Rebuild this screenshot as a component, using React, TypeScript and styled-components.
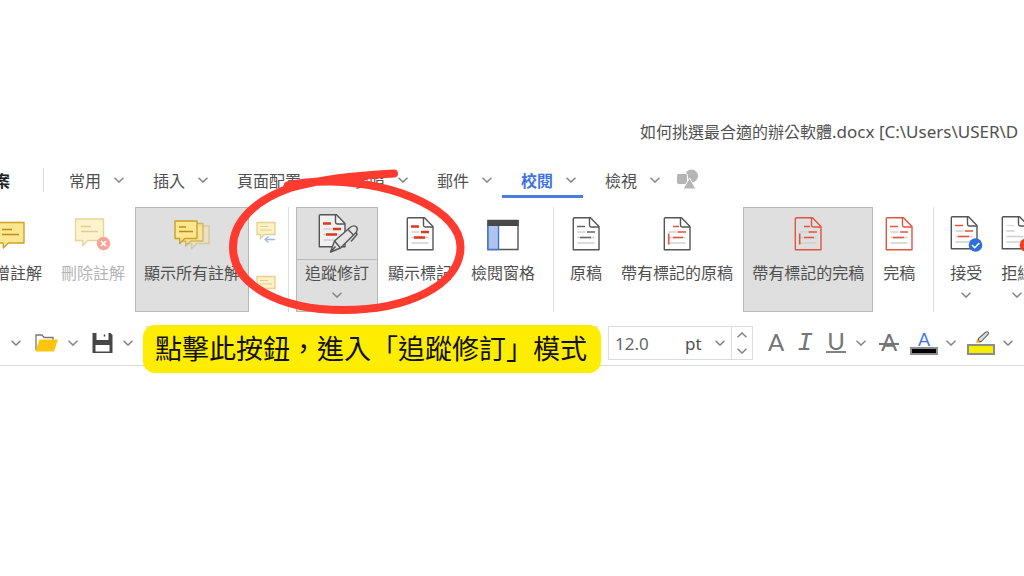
import React from "react";
import styled, { createGlobalStyle, css } from "styled-components";

const GlobalStyle = createGlobalStyle`
  * { box-sizing: border-box; }
  body {
    margin: 0;
    background: #fff;
    color: #505050;
    font-family: "Noto Sans", "Noto Sans CJK TC", sans-serif;
    font-size: 16px;
  }
  button, input, select { font: inherit; color: inherit; }
`;

const Page = styled.main`
  overflow: hidden;
  padding: 120px 0 48px;
  white-space: nowrap;
`;

const TitleBar = styled.header`
  display: flex;
  align-items: baseline;
  padding-left: 62.5%;
  line-height: 24px;
`;

const FilePath = styled.span`
  font-size: 17px;
`;

const PlainButton = styled.button`
  flex: none;
  display: flex;
  align-items: center;
  padding: 0;
  border: 0;
  background: none;
`;

const TabBar = styled.nav`
  display: flex;
  height: 36px;
  margin-top: 18px;
`;

const FileTab = styled(PlainButton)`
  justify-content: flex-end;
  width: 44px;
  padding-right: 33px;
  border-right: 1px solid #dcdcdc;
  margin: 6px 6px 6px 0;
  color: #222;
  font-weight: 700;
`;

const Tab = styled(PlainButton)<{ $active?: boolean }>`
  position: relative;
  gap: 13px;
  padding: 0 10px 0 19px;
  ${(p) =>
    p.$active &&
    css`
      color: #3f74e0;
      font-weight: 700;
      &::after {
        content: "";
        position: absolute;
        left: 0;
        right: 3px;
        bottom: 0;
        height: 3px;
        background: #4a7be0;
      }
    `}
`;

const ShapesButton = styled(PlainButton)`
  padding-left: 7px;
`;

const Ribbon = styled.section`
  position: relative;
  display: flex;
  gap: 1px;
  margin-top: 9px;
`;

const RibbonItems = styled.div`
  display: flex;
  gap: 1px;
  margin-left: -31px;
`;

const toolBox = css<{ $pressed?: boolean }>`
  border: 1px solid ${(p) => (p.$pressed ? "#b9b9b9" : "transparent")};
  background: ${(p) => (p.$pressed ? "#dfdfdf" : "transparent")};
`;

const Tool = styled(PlainButton)<{ $pressed?: boolean; $faded?: boolean }>`
  ${toolBox}
  flex-direction: column;
  height: 105px;
  padding: 3px 8px;
  color: ${(p) => (p.$faded ? "#b4b4b4" : "inherit")};
`;

const SplitTool = styled.div<{ $pressed?: boolean }>`
  ${toolBox}
  display: flex;
  flex-direction: column;
  height: 105px;
`;

const SplitTop = styled(PlainButton)`
  justify-content: center;
  height: 52px;
  padding-bottom: 2px;
  border-bottom: 1px solid #b9b9b9;
`;

const SplitBottom = styled(PlainButton)`
  flex-direction: column;
  padding: 1px 8px;
`;

const Label = styled.span`
  line-height: 24px;
  margin-bottom: 7px;
`;

const ToolIcon = styled.svg`
  display: block;
  flex: none;
  width: 44px;
  height: 44px;
  margin: 0 -6px;
  overflow: visible;
`;

const ToolLabel = styled(Label)`
  margin-top: 6px;
`;

const Divider = styled.div`
  width: 1px;
  margin: 0 6px 0 8px;
  background: #dedede;
`;

const SmallStack = styled.div`
  display: flex;
  flex-direction: column;
  gap: 32px;
  width: 29px;
  padding: 14px 0 0 6px;
`;

const Lasso = styled.svg`
  position: absolute;
  left: 220px;
  top: -47px;
  width: 250px;
  height: 160px;
  pointer-events: none;
`;

const FormatBar = styled.section`
  position: relative;
  display: flex;
  align-items: center;
  gap: 13px;
  margin-top: 9px;
  height: 45px;
  padding-left: 11px;
  border-bottom: 1px solid #dcdcdc;
`;

const Group = styled.div`
  flex: none;
  display: flex;
  align-items: center;
  gap: 10px;
`;

const Fields = styled(Group)`
  margin-right: 2px;
`;

const FontSelect = styled.select`
  appearance: none;
  width: 452px;
  height: 34px;
  border: 1px solid #dcdcdc;
  background: #fff;
`;

const SizeField = styled.div`
  display: flex;
  width: 145px;
  height: 34px;
  border: 1px solid #dcdcdc;
`;

const SizeInput = styled.input`
  width: 76px;
  padding: 0 0 0 6px;
  border: 0;
  outline: 0;
  font-size: 17px;
  color: #666;
`;

const Unit = styled.label`
  display: flex;
  align-items: center;
  width: 30px;
  font-size: 17px;
`;

const Spinner = styled.div`
  display: flex;
  flex-direction: column;
  justify-content: space-between;
  margin-left: auto;
  padding: 5px;
  border-left: 1px solid #dcdcdc;
`;

const Letter = styled(PlainButton)<{ $kind?: "italic" | "under" | "strike" }>`
  justify-content: center;
  width: ${(p) => (p.$kind === "under" || p.$kind === "strike" ? 20 : 16)}px;
  height: 24px;
  padding-bottom: 2px;
  font-family: ${(p) => (p.$kind === "italic" ? '"Liberation Mono", monospace' : 'Lato, "Open Sans", sans-serif')};
  font-style: ${(p) => (p.$kind === "italic" ? "italic" : "normal")};
  font-weight: 400;
  font-size: 24px;
  line-height: 24px;
  color: #757575;
  ${(p) =>
    p.$kind === "italic" &&
    css`
      font-size: 26px;
      padding-bottom: 0;
    `}
  ${(p) =>
    p.$kind === "under" &&
    css`
      height: 20px;
      line-height: 16px;
      border-bottom: 2px solid #808080;
    `}
  ${(p) =>
    p.$kind === "strike" &&
    css`
      background: linear-gradient(#757575, #757575) 0 12px / 100% 2px no-repeat;
    `}
`;

const ColorButton = styled(PlainButton)<{ $ink: string }>`
  flex-direction: column;
  justify-content: flex-start;
  width: 24px;
  height: 24px;
  font-family: Lato, "Open Sans", sans-serif;
  font-size: 18px;
  line-height: 16px;
  color: #3f74e0;
  &::after {
    content: "";
    width: 24px;
    height: 8px;
    border: 2px solid #8c8c8c;
    background: ${(p) => p.$ink};
  }
`;

const Callout = styled.p`
  position: absolute;
  left: 143px;
  top: 4px;
  margin: 0;
  padding: 0 14px 0 12px;
  border-radius: 12px;
  background: #ffed00;
  color: #111;
  font-size: 27px;
  line-height: 48px;
`;

function Chevron({ up = false }: { up?: boolean }) {
  return (
    <svg width="10" height="6" viewBox="0 0 10 6" fill="none" stroke="#858585" strokeWidth="1.5">
      <path d={up ? "M.5 5.2 5 .9l4.5 4.3" : "M.5.8 5 5.1 9.5.8"} />
    </svg>
  );
}

type DocProps = { outline?: string; ink?: string; bar?: boolean; bold?: boolean; blank?: boolean };

function DocShape({ outline = "#555", ink = "#e2543f", bar, bold, blank }: DocProps) {
  return (
    <g fill="none" strokeWidth="1.4">
      <path d="M10 6.700h16.500L35 15.400v23.300H9.300V7.400z" fill="#fff" fillOpacity={bar ? 0 : 0.55} stroke={outline} strokeLinejoin="round" />
      <path d="M25.500 6.700v7.600q0 1.700 1.700 1.700H35" stroke={outline} />
      <path d="M13.500 21h8M13.500 26.500h17M13.500 32h17" stroke="#cfcfcf" />
      {blank && <path d="M13.500 15.500h8" stroke="#dedede" />}
      {!blank && (
        <path
          d={bar ? "M18 15.500h6M22.500 21H31M18 26.500h10M13.700 22.500v11" : "M13 15.500h8M23 21h8M16 26.500h11"}
          stroke={ink}
          strokeWidth={bold ? 2.4 : 1.6}
        />
      )}
    </g>
  );
}

function Bubble({ x, y, w, h }: { x: number; y: number; w: number; h: number }) {
  return (
    <path
      d={`M${x} ${y}h${w}v${h}h${-w * 0.56}l-5 5v-5h${-(w * 0.44 - 5)}z`}
      fill="#fde68f"
      stroke="#c9a227"
      strokeWidth="1.4"
      strokeLinejoin="round"
    />
  );
}

function SmallComment({ label }: { label: string }) {
  return (
    <PlainButton aria-label={label}>
      <svg width="20" height="22" viewBox="0 0 20 22" fill="none" opacity=".5">
        <path d="M1 1.500h18v12H8l-3.500 4v-4H1z" fill="#fde68f" stroke="#c9a227" strokeWidth="1.3" />
        <path d="M4 5.500h8M4 9h12" stroke="#c9a227" />
        <path d="M19 18.500H9M12.500 15.500l-3.500 3 3.500 3" stroke="#3f74e0" strokeWidth="1.3" />
      </svg>
    </PlainButton>
  );
}

const TABS = [
  { name: "常用" },
  { name: "插入" },
  { name: "頁面配置" },
  { name: "參照" },
  { name: "郵件" },
  { name: "校閱", active: true },
  { name: "檢視" },
];

type DocToolProps = DocProps & { label: string; pressed?: boolean; menu?: boolean; children?: React.ReactNode };

function DocTool({ label, pressed, menu, children, ...doc }: DocToolProps) {
  return (
    <Tool $pressed={pressed}>
      <ToolIcon viewBox="0 0 44 44">
        <g transform={menu ? "translate(-2 -1)" : undefined}>
          <DocShape {...doc} />
        </g>
        {children}
      </ToolIcon>
      <ToolLabel>{label}</ToolLabel>
      {menu && <Chevron />}
    </Tool>
  );
}

export default function App() {
  return (
    <>
      <GlobalStyle />
      <Page>
        <TitleBar>
          如何挑選最合適的辦公軟體<FilePath>.docx [C:\Users\USER\D</FilePath>
        </TitleBar>

        <TabBar>
          <FileTab>檔案</FileTab>
          {TABS.map((tab) => (
            <Tab key={tab.name} $active={tab.active}>
              {tab.name}
              <Chevron />
            </Tab>
          ))}
          <ShapesButton aria-label="圖案">
            <svg width="22" height="22" viewBox="0 0 22 22" fill="#b5b5b5">
              <circle cx="14.500" cy="7" r="6.500" />
              <rect x="-.5" y="4.500" width="11" height="11" rx="2" stroke="#fff" />
              <path d="M12.500 9 19 20H6z" stroke="#fff" />
            </svg>
          </ShapesButton>
        </TabBar>

        <Ribbon>
          <RibbonItems>
            <Tool>
              <ToolIcon viewBox="0 0 44 44">
                <Bubble x={8} y={11.5} w={28} h={20.5} />
                <path d="M14 18.500h10M14 23.500h17" stroke="#b98f1a" strokeWidth="1.6" />
              </ToolIcon>
              <ToolLabel>新增註解</ToolLabel>
            </Tool>
            <Tool $faded>
              <ToolIcon viewBox="0 0 44 44">
                <g opacity=".45">
                  <Bubble x={4.5} y={8} w={28} h={21.5} />
                  <path d="M10 15.500h10M10 20.500h17" stroke="#b98f1a" strokeWidth="1.5" />
                </g>
                <circle cx="32.500" cy="32.500" r="6.700" fill="#fba39b" />
                <path d="m30 30 5 5m0-5-5 5" stroke="#fff" strokeWidth="1.7" />
              </ToolIcon>
              <ToolLabel>刪除註解</ToolLabel>
            </Tool>
            <Tool $pressed>
              <ToolIcon viewBox="0 0 44 44">
                <g opacity=".35">
                  <Bubble x={17} y={15} w={22} h={17.5} />
                </g>
                <g opacity=".65">
                  <Bubble x={11} y={12.5} w={22} h={17.5} />
                </g>
                <Bubble x={5} y={10} w={22} h={17.5} />
                <path d="M9 16h7M9 20.500h14" stroke="#b98f1a" strokeWidth="1.4" />
              </ToolIcon>
              <ToolLabel>顯示所有註解</ToolLabel>
            </Tool>
            <SmallStack>
              <SmallComment label="上一個註解" />
              <SmallComment label="下一個註解" />
            </SmallStack>
            <Divider />
            <SplitTool $pressed>
              <SplitTop aria-label="追蹤修訂">
                <ToolIcon viewBox="0 0 44 44">
                  <g transform="translate(-5 -3)">
                    <DocShape bold ink="#dc3a22" />
                  </g>
                  <g fill="#e4e4e4" stroke="#555" strokeWidth="1.4" strokeLinejoin="round">
                    <path d="m15.500 41 4-11L35 16.500q4-3 6.500-.500 2 2.500-1 6L25.500 37z" />
                    <path d="m19.500 30 6 7M33 18.500l5.500 5.500M15.500 41l5-5.500M41.500 21.500l.5 2-6 7" fill="none" />
                  </g>
                </ToolIcon>
              </SplitTop>
              <SplitBottom>
                <Label>追蹤修訂</Label>
                <Chevron />
              </SplitBottom>
            </SplitTool>
            <DocTool label="顯示標記" bold ink="#dc3a22" />
            <Tool>
              <ToolIcon viewBox="0 0 44 44">
                <path d="M7 9.500h30v29H7z" fill="#fff" stroke="#555" strokeWidth="1.4" />
                <path d="M7 14h10.500v24.500H7z" fill="#afc5ee" stroke="#3f74d0" strokeWidth="1.4" />
                <path d="M6.300 9h31.400v6H6.300z" fill="#484848" />
              </ToolIcon>
              <ToolLabel>檢閱窗格</ToolLabel>
            </Tool>
            <Divider />
            <DocTool label="原稿" ink="#666" />
            <DocTool label="帶有標記的原稿" bar />
            <DocTool label="帶有標記的完稿" bar outline="#e2543f" pressed />
            <DocTool label="完稿" outline="#e2543f" />
            <Divider />
            <DocTool label="接受" menu>
              <circle cx="31.500" cy="34" r="6.800" fill="#2f6edb" />
              <path d="m28 34 2.700 2.700 4.600-4.700" fill="none" stroke="#fff" strokeWidth="1.6" />
            </DocTool>
            <DocTool label="拒絕" menu blank>
              <circle cx="31.500" cy="34" r="6.800" fill="#f23a1d" />
              <path d="m29 31.500 5 5m0-5-5 5" stroke="#fff" strokeWidth="1.6" />
            </DocTool>
          </RibbonItems>
          <Lasso viewBox="220 160 250 160" aria-hidden="true">
            <path
              d="M394 173.500C352 176 322 179 290 188C255 200 233 222 233 247C233 285 280 310 343 310C408 310 460.500 285 460.500 247C460.500 212 400 183 330 181.500C310 181.500 298 183 288 185.500"
              fill="none"
              stroke="#ff3b30"
              strokeWidth="8"
              strokeLinecap="round"
              strokeLinejoin="round"
            />
          </Lasso>
        </Ribbon>

        <FormatBar>
          <PlainButton aria-label="新增選項">
            <Chevron />
          </PlainButton>
          <Group>
            <PlainButton aria-label="開啟">
              <svg width="24" height="20" viewBox="0 0 24 20">
                <path d="M2 17V2h6l2 2.500h9V8" fill="#fff" stroke="#777" strokeWidth="1.3" />
                <path d="M5.500 6.500H24L20 18.500H1.500z" fill="#ffc50a" />
              </svg>
            </PlainButton>
            <PlainButton aria-label="開啟選項">
              <Chevron />
            </PlainButton>
          </Group>
          <Group>
            <PlainButton aria-label="儲存">
              <svg width="22" height="20" viewBox="0 0 22 20">
                <path d="M1.500 0h18L21.500 2v18h-20z" fill="#474747" />
                <path d="M5.500 0h12v7h-12zM4.500 12h14v6.500h-14z" fill="#fff" />
                <path d="M13.500 1.500v2" stroke="#474747" strokeWidth="1.5" />
              </svg>
            </PlainButton>
            <PlainButton aria-label="儲存選項">
              <Chevron />
            </PlainButton>
          </Group>
          <Fields>
            <FontSelect aria-label="字型" />
            <SizeField>
              <SizeInput id="size" defaultValue="12.0" />
              <Unit htmlFor="size">pt</Unit>
              <PlainButton aria-label="字級清單">
                <Chevron />
              </PlainButton>
              <Spinner>
                <PlainButton aria-label="增加">
                  <Chevron up />
                </PlainButton>
                <PlainButton aria-label="減少">
                  <Chevron />
                </PlainButton>
              </Spinner>
            </SizeField>
          </Fields>
          <Letter>A</Letter>
          <Letter $kind="italic">I</Letter>
          <Group>
            <Letter $kind="under">U</Letter>
            <PlainButton aria-label="底線樣式">
              <Chevron />
            </PlainButton>
          </Group>
          <Letter $kind="strike">A</Letter>
          <Group>
            <ColorButton $ink="#000">A</ColorButton>
            <PlainButton aria-label="字型色彩">
              <Chevron />
            </PlainButton>
          </Group>
          <Group>
            <ColorButton $ink="#f5ee00" aria-label="螢光筆">
              <svg width="24" height="16" viewBox="0 0 24 16">
                <path d="m5.500 14 2.500-5 4.500 4-2 1z" fill="#ffb800" />
                <path d="m9 9 8.500-7.500q2-1.200 3 0 1.200 1.200 0 2.500l-8 8.500q-1.500.8-2.700-.5-1.300-1.300-.8-3z" fill="#ddd" stroke="#666" strokeWidth="1.3" />
              </svg>
            </ColorButton>
            <PlainButton aria-label="螢光筆色彩">
              <Chevron />
            </PlainButton>
          </Group>
          <Callout>點擊此按鈕，進入「追蹤修訂」模式</Callout>
        </FormatBar>
      </Page>
    </>
  );
}
